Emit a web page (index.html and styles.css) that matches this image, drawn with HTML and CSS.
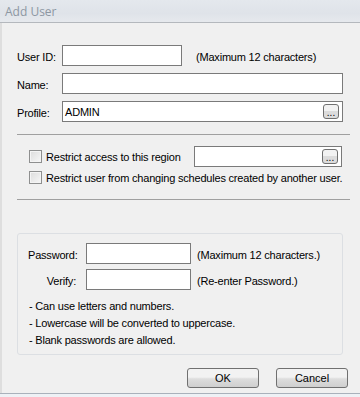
FILE: index.html
```html
<!DOCTYPE html>
<html>
  <head>
    <meta charset="UTF-8" />
    <title>Add User</title>
    <link rel="stylesheet" href="styles.css">
  </head>
  <body>
    <div class="dialog">
      <div class="title-bar">Add User</div>

      <div class="dialog-body">
        <div class="field-row">
          <label class="field-label" for="userId">User ID:</label>
          <input class="text-box short" id="userId" type="text">
          <span class="hint">(Maximum 12 characters)</span>
        </div>
        <div class="field-row">
          <label class="field-label" for="name">Name:</label>
          <input class="text-box wide" id="name" type="text">
        </div>
        <div class="field-row">
          <label class="field-label" for="profile">Profile:</label>
          <div class="text-box wide picker">
            <span class="picker-value">ADMIN</span>
            <button class="dots-button">...</button>
          </div>
        </div>

        <div class="separator first"></div>

        <div class="check-row region">
          <label class="check">
            <span class="check-box"></span>
            Restrict access to this region
          </label>
          <div class="text-box region-box picker">
            <span class="picker-value"></span>
            <button class="dots-button">...</button>
          </div>
        </div>
        <div class="check-row">
          <label class="check">
            <span class="check-box"></span>
            Restrict user from changing schedules created by another user.
          </label>
        </div>

        <div class="separator second"></div>

        <div class="password-group">
          <div class="pw-row">
            <label class="pw-label" for="password">Password:</label>
            <input class="text-box pw-box" id="password" type="password">
            <span class="pw-hint">(Maximum 12 characters.)</span>
          </div>
          <div class="pw-row">
            <label class="pw-label" for="verify">Verify:</label>
            <input class="text-box pw-box" id="verify" type="password">
            <span class="pw-hint">(Re-enter Password.)</span>
          </div>
          <ul class="rules">
            <li>- Can use letters and numbers.</li>
            <li>- Lowercase will be converted to uppercase.</li>
            <li>- Blank passwords are allowed.</li>
          </ul>
        </div>

        <div class="button-row">
          <button class="push-button">OK</button>
          <button class="push-button">Cancel</button>
        </div>
      </div>
      <div class="bottom-strip"></div>
    </div>
  </body>
</html>
```

FILE: styles.css
```css
:root {
  --face: #f0f0f0;
  --edge: #a0a0a0;
  --box-border: #7a7a7a;
  --text: #000000;
  --title-text: #8d97a2;
}

* {
  margin: 0;
  padding: 0;
  box-sizing: border-box;
}

body {
  width: 360px;
  height: 397px;
  overflow: hidden;
  background: var(--face);
  font-family: 'Liberation Sans', Arial, sans-serif;
  font-size: 11px;
  letter-spacing: -0.2px;
  color: var(--text);
}

.dialog {
  width: 360px;
  height: 397px;
  display: flex;
  flex-direction: column;
}

.title-bar {
  height: 23px;
  padding: 3px 0 0 5px;
  font-family: 'Open Sans', 'Noto Sans', sans-serif;
  font-size: 12px;
  letter-spacing: 0;
  color: var(--title-text);
  background: linear-gradient(#e4e8ed, #dfe3e9 60%, #e6e9ed);
  border-bottom: 1px solid #b4b8bd;
}

.dialog-body {
  flex: 1;
  padding: 22px 0 0 15px;
  border-left: 2px solid #dedede;
  display: flex;
  flex-direction: column;
}

.field-row {
  display: flex;
  align-items: center;
  height: 21px;
  margin-bottom: 7px;
}

.field-label {
  width: 45px;
  padding-top: 3px;
}

.text-box {
  height: 21px;
  background: #fff;
  border: 1px solid var(--box-border);
  font: inherit;
  padding: 0 3px;
}

.short {
  width: 120px;
}

.wide {
  width: 281px;
}

.hint {
  margin-left: 14px;
  padding-top: 3px;
}

.picker {
  display: flex;
  align-items: center;
  justify-content: space-between;
  padding: 0 3px 0 2px;
}

.picker-value {
  padding-top: 1px;
}

.dots-button {
  width: 16px;
  height: 15px;
  border: 1px solid #707070;
  border-radius: 3px;
  background: linear-gradient(#f2f2f2 50%, #dcdcdc 50%);
  font: inherit;
  font-size: 10px;
  line-height: 10px;
  padding-top: 2px;
}

.separator {
  width: 333px;
  height: 1px;
  background: var(--edge);
}

.separator.first {
  margin-top: 5px;
}

.check-row {
  display: flex;
  align-items: center;
  padding-left: 12px;
  height: 21px;
}

.check-row.region {
  margin-top: 11px;
  justify-content: space-between;
  width: 325px;
}

.check {
  display: flex;
  align-items: center;
  gap: 4px;
}

.check-box {
  width: 13px;
  height: 13px;
  border: 1px solid #8e8f8f;
  background: linear-gradient(135deg, #dcdcdc, #f7f7f7);
  box-shadow: inset 0 0 0 1px #f4f4f4;
}

.region-box {
  width: 148px;
  height: 21px;
}

.separator.second {
  margin-top: 11px;
}

.password-group {
  margin-top: 33px;
  width: 326px;
  height: 122px;
  border: 1px solid #dcdfe3;
  border-radius: 3px;
  padding: 9px 0 0 10px;
}

.pw-row {
  display: flex;
  align-items: center;
  height: 21px;
  margin-bottom: 5px;
}

.pw-label {
  width: 48px;
  text-align: right;
  padding-top: 2px;
}

.pw-box {
  width: 105px;
  margin-left: 10px;
}

.pw-hint {
  margin-left: 6px;
  padding-top: 2px;
}

.rules {
  list-style: none;
  margin-top: 10px;
  padding-left: 1px;
}

.rules li {
  height: 17px;
}

.button-row {
  display: flex;
  gap: 17px;
  margin: 13px 0 0 170px;
}

.push-button {
  width: 72px;
  height: 20px;
  border: 1px solid #707070;
  border-radius: 3px;
  background: linear-gradient(#f2f2f2 45%, #dddddd 55%, #cfcfcf);
  font: inherit;
  color: var(--text);
}

.bottom-strip {
  height: 4px;
  border-top: 1px solid #a9b1bb;
  background: #eef1f5;
}
```
